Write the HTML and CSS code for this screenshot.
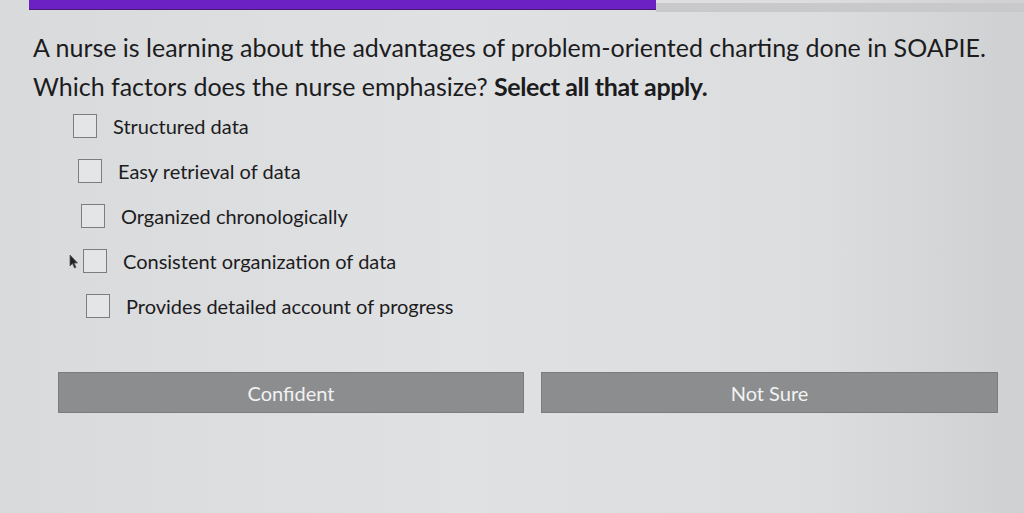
FILE: index.html
```html
<!DOCTYPE html>
<html lang="en">

<head>
    <meta charset="UTF-8">
    <meta name="viewport" content="width=device-width, initial-scale=1.0">
    <title>Question</title>
    <link rel="stylesheet" href="styles.css">
</head>

<body>
    <div class="progress">
        <span class="progress-fill"></span>
        <span class="progress-track"></span>
    </div>

    <div class="question">
        <p class="stem">A nurse is learning about the advantages of problem-oriented charting done in SOAPIE.<br>
            Which factors does the nurse emphasize? <b>Select all that apply.</b></p>

        <ul class="options">
            <li class="option"><span class="box"></span>Structured data</li>
            <li class="option"><span class="box"></span>Easy retrieval of data</li>
            <li class="option"><span class="box"></span>Organized chronologically</li>
            <li class="option">
                <svg class="cursor" width="10" height="15" viewBox="0 0 10 15">
                    <path d="M1 1 L1 12 L3.5 9.5 L5.5 14 L7 13.3 L5 9 L8.5 9 Z" fill="#222" stroke="#555" stroke-width=".8"/>
                </svg>
                <span class="box"></span>Consistent organization of data
            </li>
            <li class="option"><span class="box"></span>Provides detailed account of progress</li>
        </ul>
    </div>

    <div class="actions">
        <button class="btn">Confident</button>
        <button class="btn">Not Sure</button>
    </div>
</body>

</html>
```

FILE: styles.css
```css
html,
body {
    height: 100%;
}

body {
    margin: 0;
    font-family: Lato, "Open Sans", sans-serif;
    color: #1c1c1e;
    background: linear-gradient(90deg, #d9dadc 0%, #e0e1e3 45%, #dcdddf 80%, #cfd0d2 100%);
    overflow: hidden;
}

/* progress bar */
.progress {
    display: flex;
    align-items: flex-start;
    padding-left: 29px;
}

.progress-fill {
    width: 627px;
    height: 9px;
    background-color: #6b21c4;
    border-bottom: 1px solid #4a1a6e;
}

.progress-track {
    flex: 1;
    height: 9px;
    margin-top: 3px;
    background-color: #c9c9cb;
}

.question {
    padding: 16px 0 0 33px;
}

.stem {
    margin: 0;
    font-size: 25px;
    line-height: 39px;
    white-space: nowrap;
}

.stem b {
    font-weight: bold;
    letter-spacing: -0.4px;
}

.options {
    list-style: none;
    margin: -3px 0 0;
    padding: 0 0 0 40px;
}

.option {
    position: relative;
    display: flex;
    align-items: center;
    gap: 16px;
    height: 45px;
    font-size: 20px;
}

/* the photo is a bit skewed, rows drift right */
.option:nth-child(2) { margin-left: 5px; }
.option:nth-child(3) { margin-left: 8px; }
.option:nth-child(4) { margin-left: 10px; }
.option:nth-child(5) { margin-left: 13px; }

.box {
    width: 22px;
    height: 22px;
    border: 1.5px solid #7c7d7f;
    background-color: #e4e5e6;
    flex-shrink: 0;
}

.cursor {
    position: absolute;
    left: -14px;
    top: 16px;
}

.actions {
    display: grid;
    grid-template-columns: 466px 457px;
    gap: 17px;
    padding: 44px 0 0 58px;
}

.btn {
    height: 41px;
    border: 1px solid #7b7c7e;
    background-color: #8c8d8f;
    color: #f2f2f2;
    font-family: Lato, sans-serif;
    font-size: 20px;
}
```
